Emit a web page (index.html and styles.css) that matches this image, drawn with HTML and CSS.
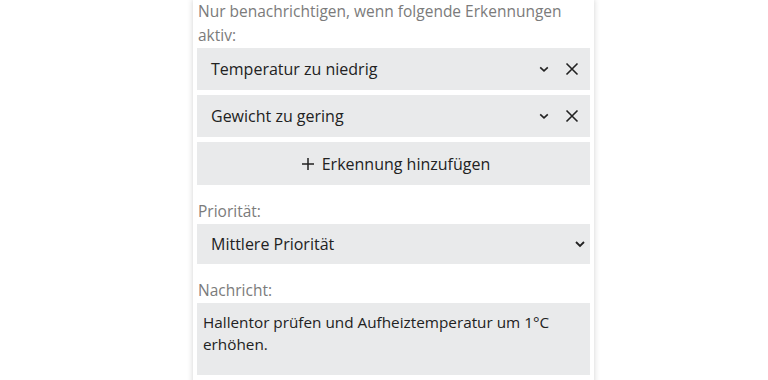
FILE: index.html
```html
<!DOCTYPE html>
<html lang="de">
<head>
    <meta charset="UTF-8">
    <meta name="viewport" content="width=device-width, initial-scale=1.0">
    <title>Benachrichtigung</title>
    <link rel="stylesheet" href="styles.css">
</head>
<body>
    <div class="page">
        <div class="panel">
            <label class="label">Nur benachrichtigen, wenn folgende Erkennungen aktiv:</label>
            <div class="detections">
                <div class="row">
                    <span class="row-text">Temperatur zu niedrig</span>
                    <button class="icon-btn">
                        <svg width="12" height="12" viewBox="0 0 12 12"><path d="M2.2 4.3 L6 7.9 L9.8 4.3" fill="none" stroke="#222" stroke-width="1.6"/></svg>
                    </button>
                    <button class="icon-btn">
                        <svg width="14" height="14" viewBox="0 0 14 14"><path d="M1.5 1.5 L12.5 12.5 M12.5 1.5 L1.5 12.5" fill="none" stroke="#222" stroke-width="1.6"/></svg>
                    </button>
                </div>
                <div class="row">
                    <span class="row-text">Gewicht zu gering</span>
                    <button class="icon-btn">
                        <svg width="12" height="12" viewBox="0 0 12 12"><path d="M2.2 4.3 L6 7.9 L9.8 4.3" fill="none" stroke="#222" stroke-width="1.6"/></svg>
                    </button>
                    <button class="icon-btn">
                        <svg width="14" height="14" viewBox="0 0 14 14"><path d="M1.5 1.5 L12.5 12.5 M12.5 1.5 L1.5 12.5" fill="none" stroke="#222" stroke-width="1.6"/></svg>
                    </button>
                </div>
                <button class="add-btn">
                    <svg width="14" height="14" viewBox="0 0 14 14"><path d="M7 1 V13 M1 7 H13" fill="none" stroke="#222" stroke-width="1.5"/></svg>
                    Erkennung hinzufügen
                </button>
            </div>

            <label class="label">Priorität:</label>
            <div class="select">
                <span>Mittlere Priorität</span>
                <svg width="12" height="12" viewBox="0 0 12 12"><path d="M2 4 L6 8 L10 4" fill="none" stroke="#222" stroke-width="1.8"/></svg>
            </div>

            <label class="label">Nachricht:</label>
            <textarea class="message">Hallentor prüfen und Aufheiztemperatur um 1°C erhöhen.</textarea>
        </div>
    </div>
</body>
</html>
```

FILE: styles.css
```css
html, body {
    margin: 0;
    height: 100%;
    background-color: #ffffff;
    font-family: "Open Sans", "Noto Sans", sans-serif;
    overflow: hidden;
}
.page {
    display: flex;
    justify-content: center;
    padding-left: 19px;
}
.panel {
    width: 393px;
    padding: 0 4px 40px 4px;
    background: white;
    box-shadow: 0 0 6px rgba(0,0,0,0.18);
    margin-top: -1px;
}
.label {
    display: block;
    color: #7b7b7b;
    font-size: 15.5px;
    line-height: 24px;
    padding-left: 1px;
}
.detections {
    display: flex;
    flex-direction: column;
    gap: 5px;
    margin-top: 1px;
    margin-bottom: 14px;
}
.row {
    display: flex;
    align-items: center;
    height: 42px;
    padding: 0 4px 0 14px;
    background-color: #e9eaeb;
    color: #222;
    font-size: 16px;
}
.row-text {
    flex: 1;
}
.icon-btn {
    border: none;
    background: none;
    width: 28px;
    height: 28px;
    padding: 0;
    display: flex;
    align-items: center;
    justify-content: center;
    cursor: pointer;
}
.add-btn {
    height: 43px;
    border: none;
    background-color: #e9eaeb;
    color: #222;
    font-family: inherit;
    font-size: 16px;
    display: flex;
    align-items: center;
    justify-content: center;
    gap: 7px;
    padding-left: 10px;
    cursor: pointer;
}
.select {
    display: flex;
    align-items: center;
    justify-content: space-between;
    height: 40px;
    margin-top: 1px;
    margin-bottom: 14px;
    padding: 0 4px 0 14px;
    background-color: #e9eaeb;
    color: #222;
    font-size: 16px;
}
.message {
    display: block;
    box-sizing: border-box;
    width: 100%;
    height: 72px;
    margin-top: 1px;
    padding: 8px 6px;
    border: none;
    resize: none;
    background-color: #e9eaeb;
    color: #222;
    font-family: inherit;
    font-size: 15.3px;
    line-height: 22px;
}
```
